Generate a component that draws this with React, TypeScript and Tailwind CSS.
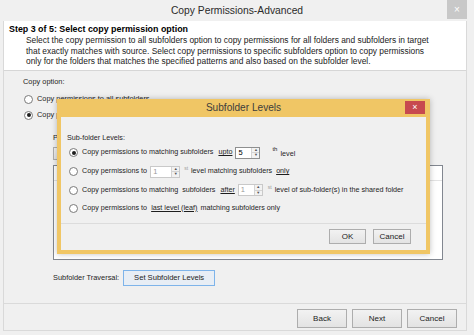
import React from "react";

const font = { fontFamily: '"Liberation Sans", Arial, sans-serif' };

function Radio({ checked = false }: { checked?: boolean }) {
  return (
    <span className="w-[9px] h-[9px] rounded-full border border-[#7a7a7a] bg-white flex items-center justify-center shrink-0">
      {checked && <span className="w-[4px] h-[4px] rounded-full bg-[#1e1e1e]" />}
    </span>
  );
}

function Spinner({ value, disabled = false, w = "w-[25px]" }: { value: string; disabled?: boolean; w?: string }) {
  return (
    <span className={`${w} h-[12px] flex border ${disabled ? "border-[#c9c9c9] text-[#9a9a9a]" : "border-[#8e8f8f] text-black"} bg-white`}>
      <span className="flex-1 pl-[2px] leading-[10px] text-[7.5px]">{value}</span>
      <span className="w-[8px] flex flex-col border-l border-[#d4d4d4] bg-[#f2f2f2]">
        <span className="flex-1 flex items-center justify-center border-b border-[#d4d4d4] text-[4px] leading-none text-[#555]">▲</span>
        <span className="flex-1 flex items-center justify-center text-[4px] leading-none text-[#555]">▼</span>
      </span>
    </span>
  );
}

function WinButton({ children, className = "" }: { children?: React.ReactNode; className?: string }) {
  return (
    <div className={`flex items-center justify-center border border-[#adadad] bg-gradient-to-b from-[#f2f2f2] to-[#e3e3e3] text-[8px] text-[#222] ${className}`}>
      {children}
    </div>
  );
}

function SubfolderDialog() {
  return (
    <div className="absolute left-[57px] top-[99px] w-[373px] h-[155px] bg-[#f0c665] flex flex-col shadow-[0_0_6px_rgba(0,0,0,0.25)]">
      <div className="h-[18px] relative flex items-center justify-center">
        <span className="text-[10.1px] text-[#3c3c3c]">Subfolder Levels</span>
        <div className="absolute right-[5px] top-[2px] w-[20px] h-[13px] bg-[#c74a4f] flex items-center justify-center text-white text-[9px] leading-none">
          ×
        </div>
      </div>
      <div className="flex-1 mx-[4px] mb-[4px] bg-[#f0f0f0] flex flex-col text-[7.2px] text-[#1e1e1e]">
        <div className="pl-[6px] pt-[16px] h-[26px] leading-[10px]">Sub-folder Levels:</div>
        <div className="pl-[8px] flex flex-col">
          <div className="h-[19px] flex items-center gap-[3px]">
            <Radio checked />
            <span className="ml-[1px]">Copy permissions to matching subfolders</span>
            <span className="underline ml-[2px]">upto</span>
            <Spinner value="5" />
            <span className="self-start mt-[2px] ml-[9px] text-[6px]">th</span>
            <span className="mt-[3px]">level</span>
          </div>
          <div className="h-[19px] flex items-center gap-[3px]">
            <Radio />
            <span className="ml-[1px]">Copy permissions to</span>
            <Spinner value="1" disabled w="w-[30px]" />
            <span className="self-start mt-[3px] ml-[1px] text-[5px] text-[#9a9a9a]">st</span>
            <span>level matching subfolders</span>
            <span className="underline ml-[1px]">only</span>
          </div>
          <div className="h-[18px] flex items-center gap-[3px]">
            <Radio />
            <span className="ml-[1px]">Copy permissions to matching&nbsp; subfolders</span>
            <span className="underline ml-[2px]">after</span>
            <Spinner value="1" disabled />
            <span className="self-start mt-[3px] ml-[2px] text-[5px] text-[#9a9a9a]">st</span>
            <span>level of sub-folder(s) in the shared folder</span>
          </div>
          <div className="h-[18px] flex items-center gap-[3px]">
            <Radio />
            <span className="ml-[1px]">Copy permissions to</span>
            <span className="underline ml-[1px]">last level (leaf)</span>
            <span>matching subfolders only</span>
          </div>
        </div>
        <div className="mt-[6px] border-t border-[#dcdcdc] flex justify-end gap-[7px] pr-[15px] pt-[5px]">
          <WinButton className="w-[37px] h-[15px]">OK</WinButton>
          <WinButton className="w-[38px] h-[15px]">Cancel</WinButton>
        </div>
      </div>
    </div>
  );
}

export default function App() {
  return (
    <div className="relative w-[474px] h-[335px] overflow-hidden bg-[#f0f0f0]" style={font}>
      {/* window title */}
      <div className="h-[21px] relative flex items-center justify-center">
        <span className="text-[10.3px] text-[#2b2b2b]">Copy Permissions-Advanced</span>
        <div className="absolute right-[7px] top-0 w-[20px] h-[19px] bg-[#c8c8c8] flex items-center justify-center text-white text-[10px]">
          ×
        </div>
      </div>

      <div className="ml-[3px] w-[464px] h-[310px] border-l border-r border-[#d9d9d9] flex flex-col">
        {/* header */}
        <div className="h-[50px] shrink-0 bg-white border-b border-[#d6d6d6] pt-[3px]">
          <div className="pl-[5px] text-[8.9px] font-bold text-black leading-[10px]">
            Step 3 of 5: Select copy permission option
          </div>
          <div className="pl-[22px] pt-[1px] text-[8.4px] leading-[10.5px] text-[#222] whitespace-nowrap">
            <div>Select the copy permission to all subfolders option to copy permissions for all folders and subfolders in target</div>
            <div>that exactly matches with source. Select copy permissions to specific subfolders option to copy permissions</div>
            <div>only for the folders that matches the specified patterns and also based on the subfolder level.</div>
          </div>
        </div>

        {/* body */}
        <div className="flex-1 flex flex-col text-[7.4px] text-[#1e1e1e]">
          <div className="pl-[19px] pt-[6px] h-[20px] leading-[10px]">Copy option:</div>
          <div className="pl-[20px] flex flex-col">
            <div className="h-[16px] flex items-center gap-[4px]">
              <Radio />
              <span>Copy permissions to all subfolders</span>
            </div>
            <div className="h-[16px] flex items-center gap-[4px]">
              <Radio checked />
              <span>Copy permissions to specific subfolders</span>
            </div>
          </div>
          <div className="pl-[49px] flex flex-col">
            <div className="h-[24px] pt-[10px] leading-[10px]">Patterns:</div>
            <WinButton className="w-[150px] h-[13px]" />
            <div className="mt-[5px] w-[390px] h-[95px] border border-[#828790] bg-white flex flex-col">
              <div className="h-[15px] border-b border-[#e3e3e3]" />
            </div>
            <div className="mt-[10px] flex items-center gap-[4px]">
              <span>Subfolder Traversal:</span>
              <div className="w-[92px] h-[16px] border border-[#7eb4ea] bg-[#e8eef5] flex items-center justify-center text-[7.6px] text-[#222]">
                Set Subfolder Levels
              </div>
            </div>
          </div>
          <div className="mt-auto border-t border-[#dadada] shadow-[0_1px_0_#ffffff] h-[27px] flex items-start pt-[5px] justify-end gap-[5px] pr-[9px]">
            <WinButton className="w-[50px] h-[19px]">Back</WinButton>
            <WinButton className="w-[50px] h-[19px]">Next</WinButton>
            <WinButton className="w-[50px] h-[19px]">Cancel</WinButton>
          </div>
        </div>
        <div className="h-[1px] shrink-0 bg-[#dadada]" />
      </div>

      <SubfolderDialog />
    </div>
  );
}
